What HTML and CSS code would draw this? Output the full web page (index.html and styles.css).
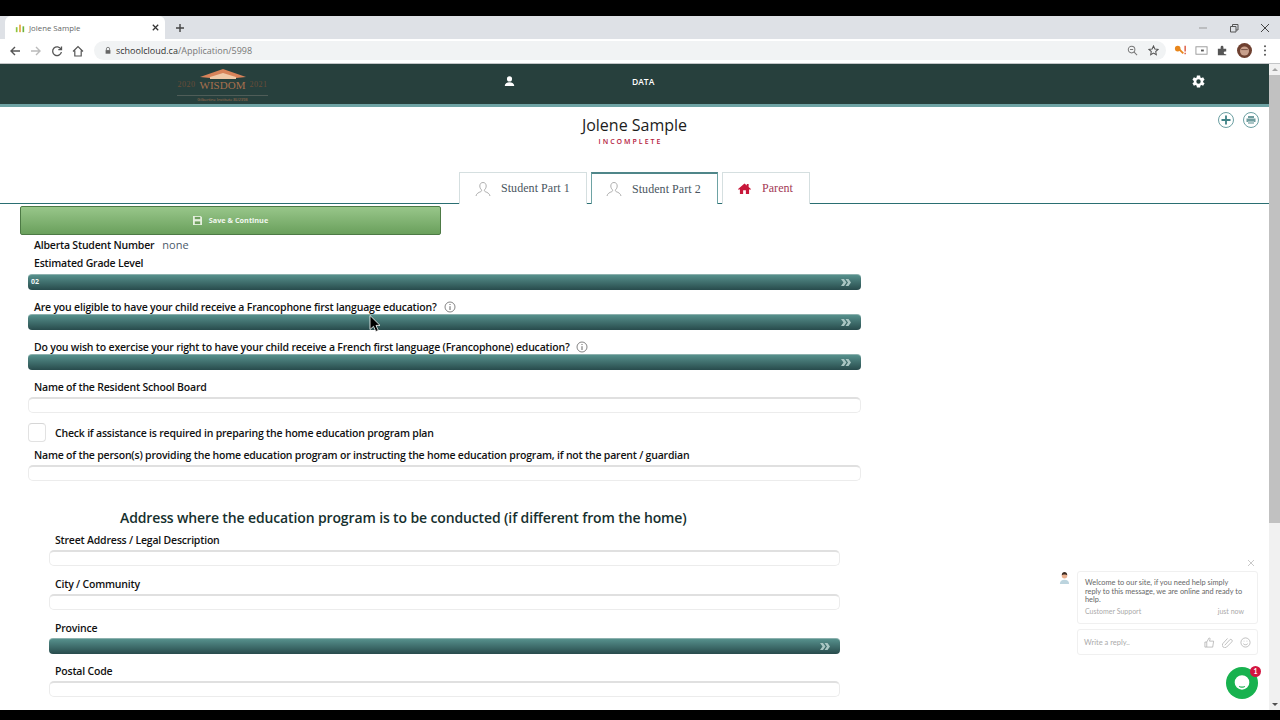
FILE: index.html
```html
<!DOCTYPE html>
<html lang="en">
<head>
<meta charset="utf-8">
<title>Jolene Sample</title>
<link rel="stylesheet" href="styles.css">
</head>
<body>
<div class="bar-black top"></div>
<div class="tabstrip">
  <div class="btab">
    <svg class="favicon" viewBox="0 0 12 12"><rect x="1" y="5" width="2" height="6" fill="#8cc63f"/><rect x="5" y="2" width="2" height="9" fill="#e8a33d"/><rect x="9" y="4" width="2" height="7" fill="#6fb53c"/></svg>
    <span class="btab-title">Jolene Sample</span>
    <svg class="btab-x" viewBox="0 0 10 10"><path d="M2 2l6 6M8 2l-6 6" stroke="#333" stroke-width="1.4"/></svg>
  </div>
  <svg class="newtab" viewBox="0 0 10 10"><path d="M5 1v8M1 5h8" stroke="#444" stroke-width="1.4"/></svg>
  <div class="winctl">
    <svg viewBox="0 0 10 10"><path d="M1 5h8" stroke="#999" stroke-width="1"/></svg>
    <svg viewBox="0 0 10 10"><path d="M1.5 3.5h5.5v5.5h-5.5zM3.5 3.5v-2h5.5v5.500h-2" fill="none" stroke="#555" stroke-width="1"/></svg>
    <svg viewBox="0 0 10 10"><path d="M1 1l8 8M9 1l-8 8" stroke="#444" stroke-width="1"/></svg>
  </div>
</div>
<div class="toolbar">
  <svg class="tool" viewBox="0 0 12 12"><path d="M11 6H2M6 2L2 6l4 4" fill="none" stroke="#555" stroke-width="1.400"/></svg>
  <svg class="tool" viewBox="0 0 12 12"><path d="M1 6h9M6 2l4 4-4 4" fill="none" stroke="#bbb" stroke-width="1.400"/></svg>
  <svg class="tool" viewBox="0 0 12 12"><path d="M10 4.200A4.400 4.400 0 1 0 10.400 7M10.500 1.500v3.200H7.300" fill="none" stroke="#555" stroke-width="1.300"/></svg>
  <svg class="tool" viewBox="0 0 12 12"><path d="M1 6.500L6 1.500l5 5M2.800 5.500V11h6.400V5.500" fill="none" stroke="#555" stroke-width="1.200"/></svg>
  <div class="omnibox">
    <svg class="lock" viewBox="0 0 10 10"><path d="M3 4.500V3a2 2 0 0 1 4 0v1.500" fill="none" stroke="#666" stroke-width="1"/><rect x="2" y="4.500" width="6" height="4.500" fill="#666"/></svg>
    <span class="url"><span class="url-host">schoolcloud.ca</span>/Application/5998</span>
    <svg class="zoom-ic" viewBox="0 0 12 12"><circle cx="5" cy="5" r="3.600" fill="none" stroke="#777" stroke-width="1.100"/><path d="M7.800 7.800L11 11M3.300 5h3.400" stroke="#777" stroke-width="1.100"/></svg>
    <svg class="star-ic" viewBox="0 0 12 12"><path d="M6 1l1.500 3.300 3.500.4-2.600 2.400.7 3.500L6 8.800l-3.100 1.800.7-3.500L1 4.700l3.500-.4z" fill="none" stroke="#555" stroke-width="1.100"/></svg>
  </div>
  <div class="exts">
    <svg viewBox="0 0 14 14"><circle cx="4" cy="5" r="3" fill="#e8861c"/><path d="M6 6l4 4" stroke="#e8861c" stroke-width="2"/><path d="M12 2v6M12 9.500v1.500" stroke="#d9482b" stroke-width="1.400"/></svg>
    <svg viewBox="0 0 14 14"><rect x="1" y="3" width="12" height="8" fill="none" stroke="#999" stroke-width="1"/><rect x="6.500" y="6" width="3" height="2" fill="#555"/></svg>
    <svg viewBox="0 0 14 14"><path d="M2 5h3V3.500a1.500 1.500 0 0 1 3 0V5h3v3h-1.200a1.500 1.500 0 0 0 0 3H11v1H2z" fill="#555"/></svg>
    <svg class="avatar" viewBox="0 0 16 16"><circle cx="8" cy="8" r="8" fill="#6e4030"/><circle cx="8" cy="8.500" r="4.800" fill="#c9a08c"/><path d="M4.500 7h7" stroke="#5b3a30" stroke-width=".8"/></svg>
    <svg class="dots" viewBox="0 0 4 14"><circle cx="2" cy="2.500" r="1.100" fill="#555"/><circle cx="2" cy="7" r="1.100" fill="#555"/><circle cx="2" cy="11.500" r="1.100" fill="#555"/></svg>
  </div>
</div>
<div class="viewport">
  <div class="page">
    <header class="appbar">
      <div class="logo">
        <svg class="logo-roof" viewBox="0 0 46 10"><path d="M0 8L23 0l23 8-10 1-13-4-13 4z" fill="#d9835a"/><path d="M10 8l13-4 13 4v2H10z" fill="#f0c9a8"/></svg>
        <div class="logo-row"><span class="logo-year">2020</span><span class="logo-name">WISDOM</span><span class="logo-year">2021</span></div>
        <div class="logo-rule"></div>
        <div class="logo-sub">Gilbertine Institute 8U2398</div>
      </div>
      <svg class="app-user" viewBox="0 0 12 12"><circle cx="6" cy="3.200" r="2.800" fill="#fff"/><path d="M.8 11c0-3 2.200-4.300 5.200-4.300s5.200 1.300 5.200 4.300z" fill="#fff"/></svg>
      <span class="app-data">DATA</span>
      <svg class="app-gear" viewBox="0 0 24 24"><path fill="#fff" d="M19.400 13a7.500 7.500 0 0 0 0-2l2.300-1.800-2.300-3.900-2.700 1.100a7.500 7.500 0 0 0-1.700-1L14.600 2.500H9.400L9 5.400a7.500 7.500 0 0 0-1.700 1L4.600 5.300 2.300 9.200 4.600 11a7.500 7.500 0 0 0 0 2l-2.300 1.800 2.300 3.900 2.700-1.100c.5.400 1.100.7 1.700 1l.4 2.900h5.200l.4-2.900c.6-.3 1.200-.6 1.700-1l2.700 1.100 2.300-3.900zM12 15.500a3.500 3.500 0 1 1 0-7 3.500 3.500 0 0 1 0 7z"/></svg>
    </header>

    <div class="titlebar">
      <div></div>
      <div class="title-block">
        <h1 class="student-name">Jolene Sample</h1>
        <div class="status">INCOMPLETE</div>
      </div>
      <div class="title-actions">
        <svg class="round-btn" viewBox="0 0 16 16"><circle cx="8" cy="8" r="7.500" fill="none" stroke="#5a9497" stroke-width=".9"/><path d="M8 3.500v9M3.500 8h9" stroke="#3f8286" stroke-width="1.800"/></svg>
        <svg class="round-btn" viewBox="0 0 16 16"><circle cx="8" cy="8" r="7.500" fill="none" stroke="#5a9497" stroke-width=".9"/><path d="M5 6V4h6v2zM3.500 6.500h9V10h-9z" fill="#6f9c9e"/><rect x="5" y="9" width="6" height="3" fill="#a8c4c5"/></svg>
      </div>
    </div>

    <nav class="tabs">
      <div class="tab">
        <svg class="tab-person" viewBox="0 0 16 16"><path d="M8 1.500c-2 0-3.200 1.500-3.200 3.500 0 1.700.8 3 1.700 3.800.3.800 0 1.500-.8 1.900C3.500 11.500 1.500 12.500 1 15M8 1.500c2 0 3.200 1.500 3.200 3.500 0 1.700-.8 3-1.700 3.800-.3.800 0 1.500.8 1.900 2.200.8 4.200 1.800 4.700 4.300" fill="none" stroke="#999" stroke-width=".8"/></svg>
        <span>Student Part 1</span>
      </div>
      <div class="tab tab-active">
        <svg class="tab-person" viewBox="0 0 16 16"><path d="M8 1.500c-2 0-3.200 1.500-3.200 3.500 0 1.700.8 3 1.700 3.800.3.800 0 1.500-.8 1.900C3.500 11.500 1.500 12.500 1 15M8 1.500c2 0 3.200 1.500 3.200 3.500 0 1.700-.8 3-1.700 3.800-.3.800 0 1.500.8 1.900 2.200.8 4.200 1.800 4.700 4.300" fill="none" stroke="#999" stroke-width=".8"/></svg>
        <span>Student Part 2</span>
      </div>
      <div class="tab tab-parent">
        <svg class="tab-home" viewBox="0 0 14 12"><path d="M7 .5L0 6.500l.9 1L2 6.600V12h3.500V8h3v4H12V6.600l1.100.9.900-1L11.500 4.300V1h-2v1.600z" fill="#c8173a"/></svg>
        <span>Parent</span>
      </div>
    </nav>

    <div class="save-wrap">
      <button class="save" type="button">
        <svg class="save-ic" viewBox="0 0 10 10"><path d="M0 0h8.500L10 1.500V10H0z" fill="#e6f0df"/><rect x="2" y="1" width="6" height="2.500" fill="#6f9f5e"/><rect x="2" y="6" width="6" height="3" fill="#6f9f5e"/></svg>
        <span class="save-text">Save &amp; Continue</span>
      </button>
    </div>

    <form class="form">
      <div class="asn"><span class="lbl">Alberta Student Number</span><span class="asn-val">none</span></div>
      <div class="lbl lbl-grade">Estimated Grade Level</div>
      <div class="select"><span class="select-val">02</span><svg class="chev" viewBox="0 0 10 7"><path d="M0 0h3L5.500 3.500 3 7H0l2.500-3.500zM4.500 0h3L10 3.500 7.500 7h-3L7 3.500z"/></svg></div>
      <div class="lbl lbl-q1">Are you eligible to have your child receive a Francophone first language education?<svg class="info" viewBox="0 0 12 12"><circle cx="6" cy="6" r="5" fill="none" stroke="#666" stroke-width=".8"/><path d="M6 5.200V9M6 3v1" stroke="#666" stroke-width="1"/></svg></div>
      <div class="select"><span class="select-val"></span><svg class="chev" viewBox="0 0 10 7"><path d="M0 0h3L5.500 3.500 3 7H0l2.500-3.500zM4.500 0h3L10 3.500 7.500 7h-3L7 3.500z"/></svg></div>
      <div class="lbl lbl-q2">Do you wish to exercise your right to have your child receive a French first language (Francophone) education?<svg class="info" viewBox="0 0 12 12"><circle cx="6" cy="6" r="5" fill="none" stroke="#666" stroke-width=".8"/><path d="M6 5.200V9M6 3v1" stroke="#666" stroke-width="1"/></svg></div>
      <div class="select"><span class="select-val"></span><svg class="chev" viewBox="0 0 10 7"><path d="M0 0h3L5.500 3.500 3 7H0l2.500-3.500zM4.500 0h3L10 3.500 7.500 7h-3L7 3.500z"/></svg></div>
      <div class="lbl lbl-board">Name of the Resident School Board</div>
      <div class="input"></div>
      <div class="check-row"><div class="checkbox"></div><span class="lbl-plain">Check if assistance is required in preparing the home education program plan</span></div>
      <div class="lbl lbl-person">Name of the person(s) providing the home education program or instructing the home education program, if not the parent / guardian</div>
      <div class="input"></div>

      <h2 class="section-title">Address where the education program is to be conducted (if different from the home)</h2>
      <div class="address">
        <div class="lbl lbl-a1">Street Address / Legal Description</div>
        <div class="input"></div>
        <div class="lbl lbl-a2">City / Community</div>
        <div class="input"></div>
        <div class="lbl lbl-a2">Province</div>
        <div class="select"><span class="select-val"></span><svg class="chev" viewBox="0 0 10 7"><path d="M0 0h3L5.500 3.500 3 7H0l2.500-3.500zM4.500 0h3L10 3.500 7.500 7h-3L7 3.500z"/></svg></div>
        <div class="lbl lbl-a3">Postal Code</div>
        <div class="input"></div>
      </div>
    </form>

    <svg class="cursor" viewBox="0 0 12 17"><path d="M1 .5v14l3.500-3.200 2.300 5.200 2.500-1.100-2.300-5H11z" fill="#000" stroke="#fff" stroke-width=".8"/></svg>

    <aside class="chat">
      <svg class="chat-close" viewBox="0 0 8 8"><path d="M1 1l6 6M7 1L1 7" stroke="#bbb" stroke-width=".8"/></svg>
      <svg class="chat-agent" viewBox="0 0 12 14"><path d="M1 14c0-3 2-4.500 5-4.500s5 1.500 5 4.500z" fill="#bcd4de"/><circle cx="6" cy="5" r="3" fill="#eab08f"/><path d="M3 4.500C3 2 4.500 1 6 1s3 1 3 3.500C8 3.500 4 3.500 3 4.500z" fill="#3a2a22"/></svg>
      <div class="chat-msg">
        <p class="chat-text">Welcome to our site, if you need help simply reply to this message, we are online and ready to help.</p>
        <div class="chat-meta"><span>Customer Support</span><span>just now</span></div>
      </div>
      <div class="chat-reply">
        <span class="chat-ph">Write a reply..</span>
        <svg viewBox="0 0 12 12"><path d="M1 5.500h2V11H1zM3 5.500L5.500 1c1 0 1.300.8 1 1.800L6 4.500h4.500l-1 6.500H3" fill="none" stroke="#aaa" stroke-width=".8"/></svg>
        <svg viewBox="0 0 12 12"><path d="M3 9l5.500-6a1.600 1.600 0 0 1 2.300 2.200L5 11a2.800 2.800 0 0 1-4-3.900l5-5.500" fill="none" stroke="#aaa" stroke-width=".8"/></svg>
        <svg viewBox="0 0 12 12"><circle cx="6" cy="6" r="5" fill="none" stroke="#aaa" stroke-width=".8"/><path d="M3.500 7.300c1.200 1.500 3.800 1.500 5 0M4 4.500h.8M7.200 4.500H8" fill="none" stroke="#aaa" stroke-width=".8"/></svg>
      </div>
      <div class="chat-bubble">
        <svg class="chat-bubble-ic" viewBox="0 0 16 16"><path d="M8 1a6.500 6.500 0 0 1 0 13 6.500 6.500 0 0 1-6.500-6.500A6.500 6.500 0 0 1 8 1z" fill="#fff"/><path d="M5.500 11c1 .9 4 .9 5 0" fill="none" stroke="#18b24f" stroke-width="1"/></svg>
        <span class="chat-badge">1</span>
      </div>
    </aside>
  </div>
  <div class="scrollbar">
    <svg class="sb-arrow" viewBox="0 0 8 4"><path d="M4 0l4 4H0z" fill="#a3a3a3"/></svg>
    <div class="sb-thumb"></div>
    <svg class="sb-arrow" viewBox="0 0 8 4"><path d="M0 0h8L4 4z" fill="#505050"/></svg>
  </div>
</div>
<div class="bar-black bottom"></div>
</body>
</html>
```

FILE: styles.css
```css
* { box-sizing: border-box; }
html, body { margin: 0; padding: 0; height: 100%; overflow: hidden; background: #000; }
body { display: flex; flex-direction: column; height: 720px; font-family: "Open Sans", "Liberation Sans", sans-serif; color: #111; }
.bar-black { background: #000; flex: none; }
.bar-black.top { height: 16px; }
.bar-black.bottom { height: 10px; }

/* browser chrome */
.tabstrip { height: 23px; flex: none; background: #dee1e6; display: flex; align-items: center; padding-left: 5px; }
.btab { width: 160px; height: 23px; background: #fff; border-radius: 6px 6px 0 0; display: flex; align-items: center; padding-left: 10px; }
.favicon { width: 10px; height: 10px; margin-right: 4px; }
.btab-title { font: 7.800px "Open Sans", sans-serif; color: #666; flex: 1; }
.btab-x { width: 9px; height: 9px; margin-right: 5px; }
.newtab { width: 10px; height: 10px; margin-left: 10px; }
.winctl { margin-left: auto; display: flex; gap: 21px; padding-right: 10px; }
.winctl svg { width: 10px; height: 10px; }
.toolbar { height: 25px; flex: none; background: #fff; display: flex; align-items: center; padding-left: 9px; border-bottom: 1px solid #c4c6c8; padding-bottom: 1px; }
.tool { width: 12px; height: 12px; margin-right: 9px; }
.omnibox { margin-left: 1px; width: 1072px; height: 19px; border-radius: 10px; background: #f1f3f4; display: flex; align-items: center; padding-left: 10px; padding-right: 7px; }
.lock { width: 8px; height: 9px; margin-right: 4px; }
.url { font: 9px "Open Sans", sans-serif; color: #777; flex: 1; }
.url-host { color: #333; }
.zoom-ic { width: 11px; height: 11px; margin-right: 10px; }
.star-ic { width: 11px; height: 11px; }
.exts { display: flex; align-items: center; margin-left: 8px; }
.exts svg { width: 13px; height: 13px; margin-right: 8px; }
.exts .avatar { width: 15px; height: 15px; margin-right: 11px; }
.exts .dots { width: 4px; height: 13px; margin-right: 0; }

.viewport { flex: 1; min-height: 0; display: flex; background: #fff; }
.page { position: relative; width: 1269px; overflow: hidden; background: #fff; }

/* app bar */
.appbar { height: 43px; background: #27403d; border-bottom: 3px solid #6ea3a4; display: flex; align-items: center; padding-left: 177px; padding-bottom: 6px; }
.logo { width: 91px; height: 40px; display: flex; flex-direction: column; align-items: center; padding-top: 5px; align-self: flex-start; flex: none; }
.logo-roof { width: 46px; height: 10px; flex: none; }
.logo-row { display: flex; align-items: center; gap: 4px; height: 11px; }
.logo-year { font: 8px "Liberation Serif", serif; color: #6a4d38; letter-spacing: .5px; }
.logo-name { font: 11px "Liberation Serif", serif; color: #a8704e; }
.logo-rule { width: 91px; height: 1px; background: #4f5d58; margin-top: 5px; flex: none; }
.logo-sub { font: 4px/6px "Open Sans", sans-serif; color: #a8704e; margin-top: 1px; }
.app-user { width: 11px; height: 11px; margin-left: 236px; }
.app-data { font: 600 8.500px "Open Sans", sans-serif; color: #fff; margin-left: 117px; }
.app-gear { width: 15px; height: 15px; margin-left: 537px; }

/* title */
.titlebar { display: grid; grid-template-columns: 1fr auto 1fr; height: 65px; }
.title-block { text-align: center; padding-top: 8px; }
.student-name { font: 400 16px/20px "Open Sans", sans-serif; margin: 0; color: #1c1c1c; }
.status { font: 600 7px/10px "Open Sans", sans-serif; color: #b5203d; letter-spacing: 2px; margin: 2px 8px 0 0; }
.title-actions { display: flex; justify-content: flex-end; gap: 9px; padding: 5px 10px 0 0; }
.round-btn { width: 16px; height: 16px; }

/* tabs */
.tabs { height: 32px; display: flex; gap: 4px; padding-left: 459px; border-bottom: 1px solid #2a6f72; }
.tab { width: 128px; height: 32px; background: #fff; border: 1px solid #d5dfe0; border-bottom: 0; display: flex; align-items: center; padding-left: 15px; gap: 10px; font: 12px "Liberation Serif", serif; color: #4a5560; letter-spacing: .05px; }
.tab-active { width: 127px; border: 1px solid #6ea3a4; border-top: 2px solid #4f8689; border-bottom: 0; padding-left: 14px; }
.tab-parent { width: 88px; color: #a33a55; gap: 11px; }
.tab-person { width: 16px; height: 16px; }
.tab-home { width: 13px; height: 11px; }

/* save */
.save-wrap { padding: 2px 0 0 20px; }
.save { width: 421px; height: 29px; border: 1px solid #4d7a45; border-radius: 2px; background: linear-gradient(#98c68a, #6aa05c); display: flex; align-items: center; justify-content: center; gap: 7px; color: #f1f7ee; font: 700 7.300px "Open Sans", sans-serif; padding: 0; }
.save-ic { width: 9px; height: 9px; }
.save-text { margin-top: -1px; }

/* form */
.form { width: 861px; padding-left: 28px; }
.lbl { font: 600 10.500px/16px "Open Sans", sans-serif; letter-spacing: -.2px; color: #111; padding-left: 6px; display: block; }
.lbl-plain { font: 600 10.500px/16px "Open Sans", sans-serif; letter-spacing: -.2px; color: #111; }
.asn { height: 18px; margin-top: 1px; display: flex; align-items: center; gap: 8px; }
.asn-val { font: 11px/14px "Open Sans", sans-serif; color: #4b5a6a; margin-top: -1px; }
.lbl-grade { margin-top: 1px; margin-bottom: 3px; }
.lbl-q1 { margin-top: 9px; margin-bottom: -1px; }
.lbl-q2 { margin-top: 9px; margin-bottom: -1px; }
.lbl-board { margin-top: 9px; margin-bottom: 2px; }
.lbl-person { margin-top: 5px; margin-bottom: 2px; }
.info { width: 12px; height: 12px; margin-left: 7px; vertical-align: -2px; }
.select { height: 16px; border-radius: 4px; background: linear-gradient(#56908c, #284b4c); display: flex; align-items: center; justify-content: space-between; padding: 0 10px 0 3px; border-top: 1px solid #8cb1ae; }
.select-val { font: 700 7px/12px "Open Sans", sans-serif; color: #f0f5f5; margin-top: -1px; }
.chev { width: 10px; height: 7px; fill: #a9c6c3; margin-top: -1px; }
.input { height: 16px; background: #fff; border: 1px solid #ececec; border-top: 2px solid #e0e0e0; border-radius: 5px; }
.check-row { display: flex; align-items: center; gap: 9px; margin-top: 10px; }
.checkbox { width: 18px; height: 19px; border: 1px solid #e2e2e2; border-top-color: #d6d6d6; border-radius: 4px; flex: none; }
.section-title { font: 600 14px/20px "Open Sans", sans-serif; letter-spacing: -.13px; color: #16302e; margin: 27px 0 0 92px; }
.address { padding-left: 21px; width: 812px; }
.lbl-a1 { margin-top: 4px; margin-bottom: 2px; }
.lbl-a2 { margin-top: 10px; margin-bottom: 2px; }
.lbl-a3 { margin-top: 9px; margin-bottom: 2px; }

/* overlays */
.cursor { position: absolute; left: 369px; top: 251px; width: 12px; height: 17px; }
.chat { position: absolute; left: 1055px; top: 490px; width: 205px; height: 150px; }
.chat-close { position: absolute; left: 192px; top: 5px; width: 8px; height: 8px; }
.chat-agent { position: absolute; left: 4px; top: 17px; width: 11px; height: 13px; }
.chat-msg { position: absolute; left: 22px; top: 17px; width: 181px; height: 53px; border: 1px solid #f0f0f0; border-radius: 3px; padding: 7px 7px; background: #fff; }
.chat-text { margin: 0; max-width: 159px; font: 7.400px/8.700px "Lato", sans-serif; color: #666; }
.chat-meta { display: flex; justify-content: space-between; font: 7px/9px "Lato", sans-serif; color: #aaa; margin-top: 2px; padding-right: 6px; }
.chat-reply { position: absolute; left: 22px; top: 75px; width: 181px; height: 26px; border: 1px solid #f0f0f0; border-radius: 3px; display: flex; align-items: center; gap: 7px; padding: 0 6px 0 6px; }
.chat-ph { flex: 1; font: 7.500px "Lato", sans-serif; color: #aaa; }
.chat-reply svg { width: 11px; height: 11px; }
.chat-bubble { position: absolute; left: 171px; top: 113px; width: 32px; height: 32px; border-radius: 50%; background: #18b24f; display: flex; align-items: center; justify-content: center; }
.chat-bubble-ic { width: 18px; height: 18px; }
.chat-badge { position: absolute; left: 24px; top: -1px; width: 11px; height: 11px; border-radius: 50%; background: #d3143f; color: #fff; font: 700 7px/11px "Lato", sans-serif; text-align: center; }

/* scrollbar */
.scrollbar { width: 11px; background: #f1f1f1; display: flex; flex-direction: column; align-items: center; }
.sb-arrow { width: 6px; height: 3px; margin: 4px 0; flex: none; }
.sb-thumb { width: 100%; height: 448px; background: #c1c1c1; margin-bottom: auto; }
```
